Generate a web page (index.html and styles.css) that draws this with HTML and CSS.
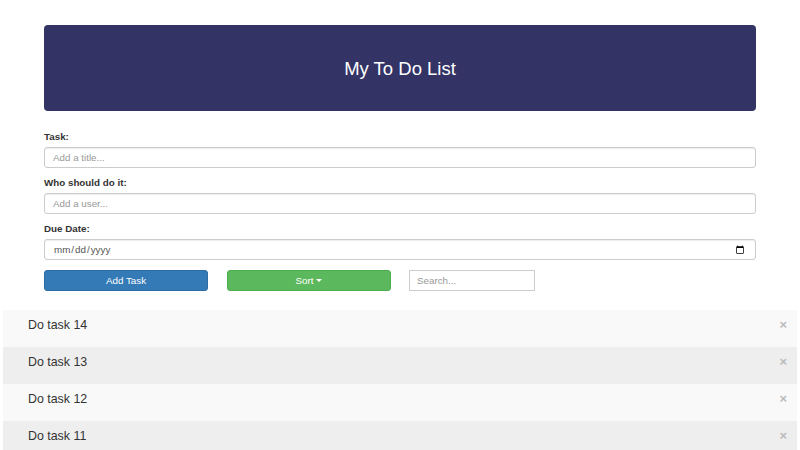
FILE: index.html
```html
<!DOCTYPE html>
<html>
<head>
<meta charset="utf-8">
<link rel="stylesheet" href="styles.css">
</head>
<body>
<div class="container">
  <div class="jumbo"><h1 class="title">My To Do List</h1></div>
  <form class="form">
    <div class="field">
      <label class="label">Task:</label>
      <input class="input" type="text" placeholder="Add a title...">
    </div>
    <div class="field">
      <label class="label">Who should do it:</label>
      <input class="input" type="text" placeholder="Add a user...">
    </div>
    <div class="field">
      <label class="label">Due Date:</label>
      <input class="input date" type="date">
    </div>
    <div class="actions">
      <button type="button" class="btn btn-blue">Add Task</button>
      <button type="button" class="btn btn-green">Sort <span class="caret"></span></button>
      <input class="search" type="text" placeholder="Search...">
    </div>
  </form>
</div>
<ul class="list">
  <li class="item odd"><span>Do task 14</span><span class="close">×</span></li>
  <li class="item even"><span>Do task 13</span><span class="close">×</span></li>
  <li class="item odd"><span>Do task 12</span><span class="close">×</span></li>
  <li class="item even"><span>Do task 11</span><span class="close">×</span></li>
</ul>
</body>
</html>
```
FILE: styles.css
```css
html, body {
  margin: 0;
  padding: 0;
  background: #fff;
  font-family: "Liberation Sans", Arial, sans-serif;
  color: #333;
  overflow: hidden;
}
.container {
  padding: 25px 44px 0;
}
.jumbo {
  height: 86px;
  background: #333366;
  border-radius: 4px;
  display: flex;
  align-items: center;
  justify-content: center;
}
.title {
  margin: 2px 0 0;
  color: #fff;
  font-weight: normal;
  font-size: 18.5px;
}
.form {
  margin: 20px 0 0;
}
.field {
  margin-bottom: 9px;
}
.label {
  display: block;
  font-size: 9.8px;
  line-height: 12px;
  font-weight: bold;
  margin-bottom: 4px;
  color: #333;
}
.input {
  display: block;
  box-sizing: border-box;
  width: 100%;
  height: 21px;
  border: 1px solid #ccc;
  border-radius: 3px;
  padding: 0 8px;
  font-family: "Liberation Sans", Arial, sans-serif;
  font-size: 9.8px;
  color: #555;
  box-shadow: inset 0 1px 1px rgba(0,0,0,.075);
  outline: none;
}
.input::placeholder, .search::placeholder {
  color: #999;
}
.actions {
  display: flex;
  gap: 19px;
  margin-top: 10px;
}
.btn {
  width: 164px;
  height: 21px;
  border: 1px solid;
  border-radius: 3px;
  color: #fff;
  font-family: "Liberation Sans", Arial, sans-serif;
  font-size: 9.8px;
  padding: 0;
  display: flex;
  align-items: center;
  justify-content: center;
  gap: 3px;
}
.btn-blue {
  background: #337ab7;
  border-color: #2e6da4;
}
.btn-green {
  background: #5cb85c;
  border-color: #4cae4c;
}
.caret {
  width: 0;
  height: 0;
  border-left: 3px solid transparent;
  border-right: 3px solid transparent;
  border-top: 3px solid #fff;
}
.search {
  box-sizing: border-box;
  width: 126px;
  height: 21px;
  margin-left: -1px;
  border: 1px solid #ccc;
  border-radius: 0;
  padding: 0 7px;
  font-family: "Liberation Sans", Arial, sans-serif;
  font-size: 9.8px;
  outline: none;
}
.list {
  list-style: none;
  margin: 19px 3px 0;
  padding: 0;
}
.item {
  box-sizing: border-box;
  height: 37px;
  display: flex;
  align-items: flex-start;
  justify-content: space-between;
  padding: 8px 10px 0 25px;
  font-size: 12.4px;
  line-height: 14px;
  color: #333;
}
.odd { background: #f9f9f9; }
.even { background: #eeeeee; }
.close {
  color: #bbb;
  font-size: 13px;
  font-weight: bold;
}
```
